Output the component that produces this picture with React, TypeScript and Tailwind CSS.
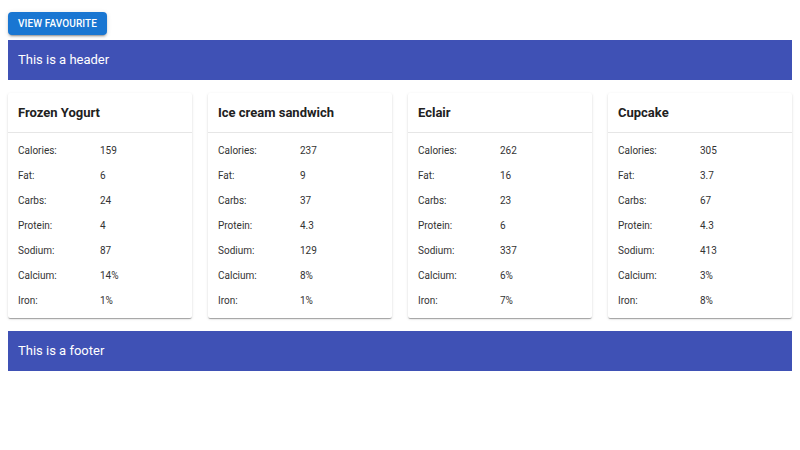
const foods = [
  { name: "Frozen Yogurt", calories: 159, fat: 6, carbs: 24, protein: 4, sodium: 87, calcium: "14%", iron: "1%" },
  { name: "Ice cream sandwich", calories: 237, fat: 9, carbs: 37, protein: 4.3, sodium: 129, calcium: "8%", iron: "1%" },
  { name: "Eclair", calories: 262, fat: 16, carbs: 23, protein: 6, sodium: 337, calcium: "6%", iron: "7%" },
  { name: "Cupcake", calories: 305, fat: 3.7, carbs: 67, protein: 4.3, sodium: 413, calcium: "3%", iron: "8%" },
];

type Food = (typeof foods)[number];

function FoodCard({ food }: { food: Food }) {
  const rows: [string, string | number][] = [
    ["Calories:", food.calories],
    ["Fat:", food.fat],
    ["Carbs:", food.carbs],
    ["Protein:", food.protein],
    ["Sodium:", food.sodium],
    ["Calcium:", food.calcium],
    ["Iron:", food.iron],
  ];
  return (
    <div className="bg-white rounded-[2px] shadow-[0_2px_1px_-1px_rgba(0,0,0,0.2),0_1px_1px_0_rgba(0,0,0,0.14),0_1px_3px_0_rgba(0,0,0,0.12)]">
      <div className="h-[40px] flex items-center px-[10px] border-b border-[#e6e6e6]">
        <h2 className="text-[13px] font-bold text-[#212121]">{food.name}</h2>
      </div>
      <div className="px-[10px] py-[5px]">
        {rows.map(([label, value]) => (
          <div key={label} className="h-[25px] flex items-center text-[10px] text-[#333]">
            <span className="w-[82px]">{label}</span>
            <span>{value}</span>
          </div>
        ))}
      </div>
    </div>
  );
}

export default function App() {
  return (
    <div className="min-h-[450px] bg-white px-2 pt-3 font-['Roboto',_'Liberation_Sans',_sans-serif]">
      <button className="block h-[23px] px-[10px] rounded bg-[#1976d2] text-white text-[10px] font-medium tracking-[0.01em] uppercase shadow-[0_3px_1px_-2px_rgba(0,0,0,0.2),0_2px_2px_0_rgba(0,0,0,0.14),0_1px_5px_0_rgba(0,0,0,0.12)]">
        View favourite
      </button>

      {/* Header */}
      <header className="mt-[5px] h-[40px] bg-[#3f51b5] flex items-center px-[10px] text-white text-[13px]">
        This is a header
      </header>

      <div className="grid grid-cols-4 gap-4 my-[13px]">
        {foods.map((f) => (
          <FoodCard key={f.name} food={f} />
        ))}
      </div>

      {/* Footer */}
      <footer className="h-[40px] bg-[#3f51b5] flex items-center px-[10px] text-white text-[13px]">
        This is a footer
      </footer>
    </div>
  );
}
